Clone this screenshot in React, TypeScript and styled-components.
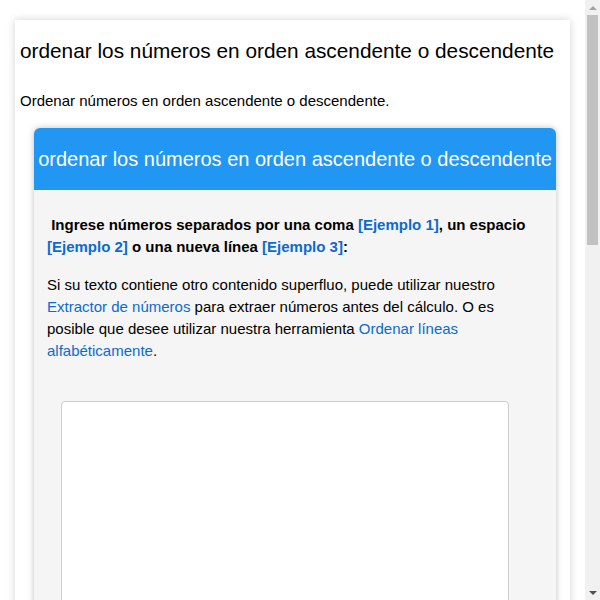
import styled, { createGlobalStyle } from "styled-components";

const GlobalStyle = createGlobalStyle`
  html, body {
    margin: 0;
    padding: 0;
    background: #ffffff;
    font-family: "Liberation Sans", Arial, sans-serif;
    color: #000;
  }
`;

const Shell = styled.div`
  display: flex;
  align-items: flex-start;
`;

const Page = styled.div`
  flex: 1;
  min-width: 0;
  padding: 20px 15px 260px;
`;

const ScrollTrack = styled.div`
  position: sticky;
  top: 0;
  width: 15px;
  height: 100vh;
  background: #f1f1f1;
  display: flex;
  flex-direction: column;
  align-items: center;
`;

const ScrollButton = styled.div`
  height: 15px;
  width: 15px;
  display: flex;
  align-items: center;
  justify-content: center;
`;

const Arrow = styled.span<{ $down?: boolean }>`
  width: 0;
  height: 0;
  border-left: 4px solid transparent;
  border-right: 4px solid transparent;
  ${(p) =>
    p.$down
      ? "border-top: 4px solid #505050;"
      : "border-bottom: 4px solid #a3a3a3;"}
`;

const Thumb = styled.div`
  width: 11px;
  height: 230px;
  background: #c1c1c1;
`;

const Spacer = styled.div`
  flex: 1;
`;

const Card = styled.div`
  background: #ffffff;
  box-shadow: 0 0 8px rgba(0, 0, 0, 0.18);
  padding: 18px 5px 20px;
`;

const Title = styled.h1`
  font-size: 20.8px;
  font-weight: normal;
  line-height: 26px;
  margin: 0 0 28px;
`;

const Lead = styled.p`
  font-size: 15px;
  line-height: 18px;
  margin: 0 0 18px;
`;

const Tool = styled.div`
  margin: 0 9px 0 14px;
  border-radius: 6px;
  overflow: hidden;
  box-shadow: 0 0 6px rgba(0, 0, 0, 0.25);
  background: #f5f5f5;
`;

const ToolHead = styled.div`
  background: #2196f3;
  color: #ffffff;
  height: 62px;
  display: flex;
  align-items: center;
  justify-content: center;
  font-size: 20px;
  white-space: nowrap;
`;

const ToolBody = styled.div`
  padding: 24px 13px 30px;
  font-size: 15px;
  line-height: 22px;
`;

const Intro = styled.p`
  font-weight: bold;
  margin: 0 0 16px;
`;

const Note = styled.p`
  margin: 0 0 39px;
`;

const Link = styled.a`
  color: #0b6bd3;
  text-decoration: none;
`;

const Input = styled.textarea`
  display: block;
  margin-left: 14px;
  width: 448px;
  height: 300px;
  box-sizing: border-box;
  border: 1px solid #cccccc;
  border-radius: 4px;
  background: #ffffff;
  resize: none;
  font-family: "Liberation Sans", Arial, sans-serif;
  font-size: 15px;
`;

export default function App() {
  return (
    <>
      <GlobalStyle />
      <Shell>
        <Page>
          <Card>
            <Title>ordenar los números en orden ascendente o descendente</Title>
            <Lead>Ordenar números en orden ascendente o descendente.</Lead>
            <Tool>
              <ToolHead>ordenar los números en orden ascendente o descendente</ToolHead>
              <ToolBody>
                <Intro>
                  &nbsp;Ingrese números separados por una coma <Link href="#">[Ejemplo 1]</Link>, un espacio{" "}
                  <Link href="#">[Ejemplo 2]</Link> o una nueva línea <Link href="#">[Ejemplo 3]</Link>:
                </Intro>
                <Note>
                  Si su texto contiene otro contenido superfluo, puede utilizar nuestro{" "}
                  <Link href="#">Extractor de números</Link> para extraer números antes del cálculo. O es
                  posible que desee utilizar nuestra herramienta <Link href="#">Ordenar líneas alfabéticamente</Link>.
                </Note>
                <Input />
              </ToolBody>
            </Tool>
          </Card>
        </Page>
        <ScrollTrack>
          <ScrollButton>
            <Arrow />
          </ScrollButton>
          <Thumb />
          <Spacer />
          <ScrollButton>
            <Arrow $down />
          </ScrollButton>
        </ScrollTrack>
      </Shell>
    </>
  );
}
